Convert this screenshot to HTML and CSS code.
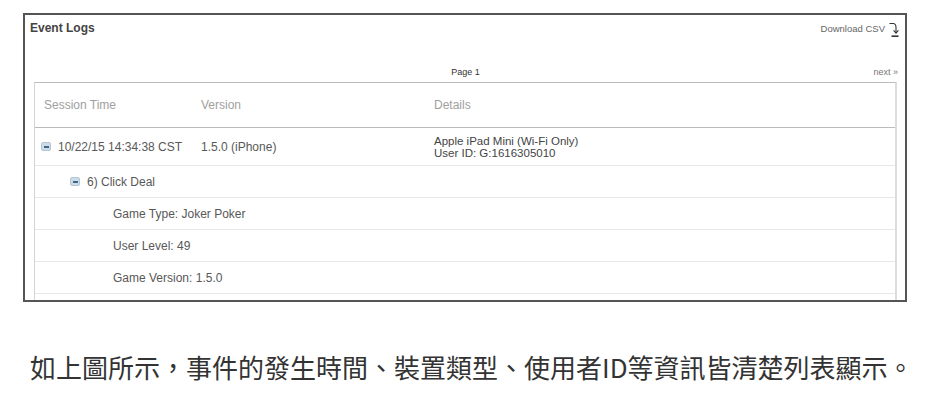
FILE: index.html
```html
<!DOCTYPE html>
<html lang="zh-Hant-TW">
<head>
<meta charset="utf-8">
<title>Event Logs</title>
<link rel="stylesheet" href="styles.css">
</head>
<body>
<div class="panel" lang="en">
  <div class="titlebar">
    <span class="title">Event Logs</span>
    <span class="download">Download CSV
      <svg class="dl-icon" width="11" height="17" viewBox="0 0 11 17" aria-hidden="true">
        <path d="M1.5 2.5 H5 Q8 2.5 8 6.5 V11.5" fill="none" stroke="#333" stroke-width="1.1"/>
        <path d="M5.6 9.4 L8 12.2 L10.4 9.4" fill="none" stroke="#333" stroke-width="1.1"/>
        <path d="M3.5 15.2 H10.5" stroke="#333" stroke-width="1.6"/>
      </svg>
    </span>
  </div>
  <div class="table-wrap">
    <div class="pager">
      <span class="page">Page 1</span>
      <span class="next">next »</span>
    </div>
    <div class="table">
      <div class="row head">
        <div>Session Time</div>
        <div>Version</div>
        <div>Details</div>
      </div>
      <div class="row session">
        <div class="cell-icon"><span class="minus"></span>10/22/15 14:34:38 CST</div>
        <div>1.5.0 (iPhone)</div>
        <div class="details">Apple iPad Mini (Wi-Fi Only)<br>User ID: G:1616305010</div>
      </div>
      <div class="row event">
        <div class="cell-icon"><span class="minus"></span>6) Click Deal</div>
      </div>
      <div class="row attr">Game Type: Joker Poker</div>
      <div class="row attr">User Level: 49</div>
      <div class="row attr">Game Version: 1.5.0</div>
      <div class="row attr"></div>
    </div>
  </div>
</div>
<p class="caption" lang="zh-TW">如上圖所示<span class="punct">，</span>事件的發生時間<span class="punct">、</span>裝置類型<span class="punct">、</span>使用者ID等資訊皆清楚列表顯示<span class="punct">。</span></p>
</body>
</html>
```
FILE: styles.css
```css
html, body {
  margin: 0;
  padding: 0;
  background: #fff;
}
body {
  font-family: "Liberation Sans", Arial, sans-serif;
  color: #555;
}
.panel {
  box-sizing: border-box;
  margin: 13px 0 0 23px;
  width: 884px;
  height: 289px;
  border: 2px solid #555;
  overflow: hidden;
}
.titlebar {
  height: 26px;
  display: flex;
  align-items: center;
  justify-content: space-between;
  padding: 0 6px 0 5px;
}
.title {
  font-weight: bold;
  font-size: 12px;
  color: #444;
}
.download {
  display: flex;
  align-items: center;
  gap: 3px;
  font-size: 9.5px;
  color: #666;
}
.dl-icon {
  display: block;
  margin-top: 2px;
}
.table-wrap {
  margin: 20px 8px 0 9px;
}
.pager {
  height: 21px;
  display: flex;
  align-items: center;
  justify-content: center;
  position: relative;
  font-size: 9px;
}
.page {
  color: #333;
}
.next {
  position: absolute;
  right: -1px;
  color: #777;
}
.table {
  border-left: 1px solid #d4d4d4;
  border-right: 2px solid #dcdcdc;
  border-top: 1px solid #bcbcbc;
}
.row {
  display: grid;
  grid-template-columns: 157px 233px 1fr;
  align-items: center;
  font-size: 12px;
  color: #585858;
  border-bottom: 1px solid #e8e8e8;
  height: 31px;
  padding-left: 9px;
}
.row.head {
  height: 44px;
  color: #a0a0a0;
  border-bottom: 1px solid #bcbcbc;
}
.row.session {
  height: 37px;
  padding-left: 6px;
  grid-template-columns: 160px 233px 1fr;
}
.row.event {
  padding-left: 35px;
  grid-template-columns: 1fr;
}
.row.attr {
  display: flex;
  padding-left: 78px;
}
.cell-icon {
  display: flex;
  align-items: center;
  gap: 7px;
}
.minus {
  box-sizing: border-box;
  width: 10px;
  height: 9px;
  border: 1px solid #b3c6d6;
  border-radius: 2px;
  background: #cddbe7;
  display: flex;
  align-items: center;
  justify-content: center;
}
.minus::before {
  content: "";
  width: 5px;
  height: 2px;
  background: #3f6888;
}
.details {
  font-size: 11.5px;
  line-height: 12px;
  color: #444;
}
.caption {
  margin: 50px 0 0 30px;
  font-family: "Noto Sans CJK TC", "Noto Sans CJK JP", sans-serif;
  font-size: 26px;
  line-height: 30px;
  height: 30px;
  color: #333;
  white-space: nowrap;
}
.punct {
  font-feature-settings: "halt";
  padding: 0 0.25em;
}
```
